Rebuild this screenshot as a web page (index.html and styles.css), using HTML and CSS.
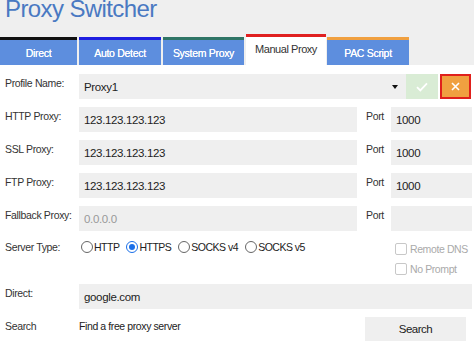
FILE: index.html
```html
<!DOCTYPE html>
<html>
<head>
<meta charset="utf-8">
<link rel="stylesheet" href="styles.css">
</head>
<body>
<div class="header">
  <div class="title">Proxy Switcher</div>
  <div class="tabs">
    <div class="tab t-direct">Direct</div>
    <div class="tab t-auto">Auto Detect</div>
    <div class="tab t-system">System Proxy</div>
    <div class="tab t-manual active">Manual Proxy</div>
    <div class="tab t-pac">PAC Script</div>
  </div>
</div>
<div class="form">
  <div class="row">
    <div class="label">Profile Name:</div>
    <div class="field select">Proxy1<span class="arrow"></span></div>
    <div class="btn ok"><svg width="12" height="10" viewBox="0 0 12 10"><path d="M1 5.2 L4.3 8.4 L11 1.4" fill="none" stroke="#fff" stroke-width="1.8"/></svg></div>
    <div class="btn cancel"><svg width="9" height="9" viewBox="0 0 9 9"><path d="M1 1 L8 8 M8 1 L1 8" stroke="#fff" stroke-width="1.6"/></svg></div>
  </div>
  <div class="row">
    <div class="label">HTTP Proxy:</div>
    <div class="field">123.123.123.123</div>
    <div class="port-label">Port</div>
    <div class="field port">1000</div>
  </div>
  <div class="row">
    <div class="label">SSL Proxy:</div>
    <div class="field">123.123.123.123</div>
    <div class="port-label">Port</div>
    <div class="field port">1000</div>
  </div>
  <div class="row">
    <div class="label">FTP Proxy:</div>
    <div class="field">123.123.123.123</div>
    <div class="port-label">Port</div>
    <div class="field port">1000</div>
  </div>
  <div class="row">
    <div class="label">Fallback Proxy:</div>
    <div class="field placeholder">0.0.0.0</div>
    <div class="port-label">Port</div>
    <div class="field port"></div>
  </div>
  <div class="row type-row">
    <div class="label">Server Type:</div>
    <div class="radios">
      <span class="radio"></span><span class="rtext">HTTP</span>
      <span class="radio checked"></span><span class="rtext">HTTPS</span>
      <span class="radio"></span><span class="rtext">SOCKS v4</span>
      <span class="radio"></span><span class="rtext">SOCKS v5</span>
    </div>
    <div class="checks">
      <div class="check"><span class="box"></span>Remote DNS</div>
      <div class="check"><span class="box"></span>No Prompt</div>
    </div>
  </div>
  <div class="row">
    <div class="label">Direct:</div>
    <div class="field">google.com</div>
  </div>
  <div class="row search-row">
    <div class="label">Search</div>
    <div class="find">Find a free proxy server</div>
    <div class="search-btn">Search</div>
  </div>
</div>
</body>
</html>
```
FILE: styles.css
```css
html, body {
  margin: 0;
  padding: 0;
  background: #fff;
  font-family: "Liberation Sans", Arial, sans-serif;
  color: #333;
}
.header {
  background: #efefef;
  height: 65px;
}
.title {
  height: 34px;
  line-height: 18px;
  font-size: 24px;
  letter-spacing: -0.6px;
  color: #4a79c2;
  padding-left: 5px;
}
.tabs {
  display: flex;
  align-items: flex-end;
  gap: 2px;
  height: 31px;
}
.tab {
  box-sizing: border-box;
  height: 28px;
  background: #5d8ede;
  color: #fff;
  font-size: 10.5px;
  letter-spacing: -0.3px;
  text-align: center;
  line-height: 26px;
  border-top: 3px solid #000;
  text-shadow: 0 0 0.4px #fff;
}
.t-direct { width: 77px; border-top-color: #111; }
.t-auto { width: 82px; border-top-color: #1e1ee0; }
.t-system { width: 81px; border-top-color: #2f7566; }
.t-manual { width: 80px; }
.t-pac { width: 82px; border-top-color: #f0a040; margin-left: -1px; }
.tab.active {
  height: 31px;
  background: #fff;
  color: #333;
  border-top-color: #e02020;
  line-height: 24px;
  font-size: 11px;
  letter-spacing: -0.45px;
  text-shadow: none;
}
.form {
  padding: 9px 2px 0 5px;
}
.row {
  display: flex;
  align-items: center;
  height: 25px;
  margin-bottom: 8px;
}
.label {
  width: 74px;
  flex: none;
  font-size: 10.5px;
  letter-spacing: -0.35px;
  color: #333;
  align-self: flex-start;
  padding-top: 3px;
  white-space: nowrap;
}
.field {
  box-sizing: border-box;
  flex: 1;
  height: 25px;
  background: #efefef;
  font-size: 11.5px;
  letter-spacing: -0.35px;
  color: #222;
  padding-left: 5px;
  line-height: 26px;
}
.placeholder { color: #999; }
.select {
  position: relative;
}
.arrow {
  position: absolute;
  left: 313px;
  top: 11px;
  width: 0;
  height: 0;
  border-left: 3.5px solid transparent;
  border-right: 3.5px solid transparent;
  border-top: 4px solid #111;
}
.btn {
  box-sizing: border-box;
  height: 25px;
  display: flex;
  align-items: center;
  justify-content: center;
  flex: none;
}
.ok {
  width: 32px;
  background: #d9ecd5;
}
.cancel {
  width: 31px;
  margin-left: 2px;
  margin-right: 1px;
  background: #f0a040;
  border: 2px solid #e0201c;
}
.port-label {
  width: 34px;
  flex: none;
  box-sizing: border-box;
  padding-left: 9px;
  font-size: 10.5px;
  letter-spacing: -0.35px;
  color: #333;
  align-self: flex-start;
  padding-top: 3px;
}
.field.port {
  flex: none;
  width: 81px;
}
.type-row {
  height: 40px;
  align-items: flex-start;
  margin-bottom: 5px;
}
.type-row .label {
  padding-top: 2px;
}
.radios {
  display: flex;
  align-items: center;
  font-size: 10.5px;
  letter-spacing: -0.5px;
  color: #222;
  height: 16px;
  padding-left: 2px;
}
.radio {
  box-sizing: border-box;
  width: 12px;
  height: 12px;
  border: 1px solid #666;
  border-radius: 50%;
  margin-right: 1px;
  position: relative;
}
.radio.checked {
  border: 1.5px solid #1a6fe8;
}
.radio.checked::after {
  content: "";
  position: absolute;
  left: 1.5px;
  top: 1.5px;
  width: 6px;
  height: 6px;
  border-radius: 50%;
  background: #1a6fe8;
}
.rtext {
  margin-right: 7px;
}
.checks {
  margin-left: auto;
  width: 77px;
  font-size: 10.5px;
  letter-spacing: -0.4px;
  color: #aaa;
  white-space: nowrap;
}
.check {
  display: flex;
  align-items: center;
  height: 20px;
}
.box {
  box-sizing: border-box;
  width: 12px;
  height: 12px;
  border: 1px solid #c8c8c8;
  border-radius: 2px;
  margin-right: 3px;
}
.search-row {
  height: 24px;
}
.find {
  flex: 1;
  font-size: 10.5px;
  letter-spacing: -0.4px;
  color: #222;
  align-self: flex-start;
  padding-top: 3px;
}
.search-btn {
  width: 101px;
  height: 24px;
  margin-right: 6px;
  background: #efefef;
  font-size: 11.5px;
  letter-spacing: -0.5px;
  color: #222;
  text-align: center;
  line-height: 24px;
}
```
